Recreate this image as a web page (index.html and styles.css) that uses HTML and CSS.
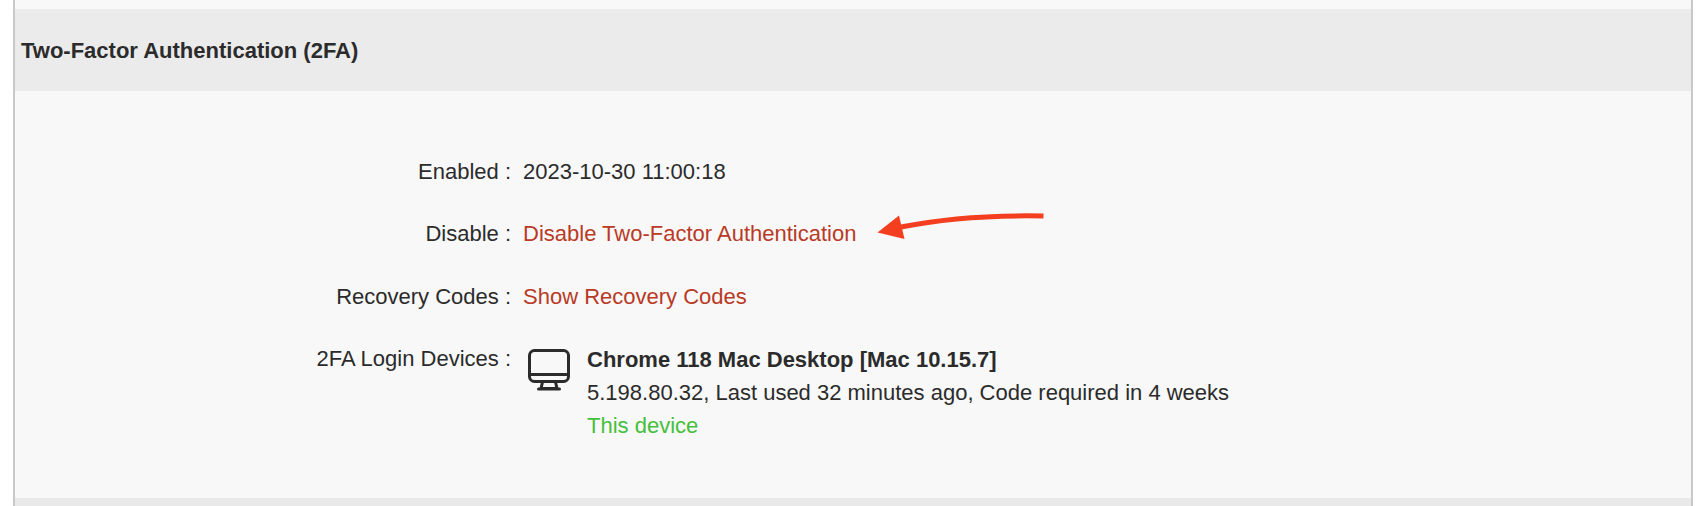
FILE: index.html
```html
<!DOCTYPE html>
<html lang="en">
<head>
    <meta charset="UTF-8">
    <title>Two-Factor Authentication</title>
    <link rel="stylesheet" href="styles.css">
</head>
<body>
    <div class="panel">
        <div class="panel-title">Two-Factor Authentication (2FA)</div>
        <div class="panel-body">
            <div class="row">
                <div class="label">Enabled :</div>
                <div class="value">2023-10-30 11:00:18</div>
            </div>
            <div class="row">
                <div class="label">Disable :</div>
                <div class="value"><a class="link" href="#">Disable Two-Factor Authentication</a></div>
            </div>
            <div class="row">
                <div class="label">Recovery Codes :</div>
                <div class="value"><a class="link" href="#">Show Recovery Codes</a></div>
            </div>
            <div class="row">
                <div class="label">2FA Login Devices :</div>
                <div class="value device">
                    <svg class="device-icon" viewBox="0 0 42 42" fill="none" stroke="#2b2b2b" stroke-width="3">
                        <rect x="1.5" y="1.5" width="39" height="31" rx="5"/>
                        <path d="M2 25.5h38"/>
                        <path d="M14.5 33l-1.5 6.5h16l-1.5-6.5"/>
                        <path d="M10.5 40h21" stroke-linecap="round"/>
                    </svg>
                    <div class="device-info">
                        <div class="device-name">Chrome 118 Mac Desktop [Mac 10.15.7]</div>
                        <div>5.198.80.32, Last used 32 minutes ago, Code required in 4 weeks</div>
                        <div class="device-current">This device</div>
                    </div>
                </div>
            </div>
        </div>
        <div class="panel-next"></div>
    </div>
    <!-- arrow drawn over the screenshot -->
    <svg class="arrow" viewBox="0 0 180 40" fill="none">
        <path d="M25 22C70 13 115 10 167.5 11" stroke="#f33f1f" stroke-width="5"/>
        <path d="M1.5 27.5L23 10.5L28.5 34Z" fill="#f33f1f"/>
    </svg>
</body>
</html>
```

FILE: styles.css
```css
* {
    margin: 0;
    padding: 0;
    box-sizing: border-box;
}
body {
    background: #fff;
    height: 506px;
    overflow: hidden;
    padding: 0 3px 0 13px;
    font-family: "Liberation Sans", Arial, sans-serif;
    font-size: 22px;
    color: #2b2b2b;
}
.panel {
    height: 506px;
    background: #f8f8f8;
    border-left: 2px solid #c8c8c8;
    border-right: 2px solid #c8c8c8;
    padding-top: 9px;
    display: flex;
    flex-direction: column;
}
.panel-title {
    height: 82px;
    background: #ebebeb;
    padding: 2px 0 0 6px;
    display: flex;
    align-items: center;
    font-weight: bold;
}
.panel-body {
    flex: 1;
    padding-top: 69px;
    display: flex;
    flex-direction: column;
    gap: 38.4px;
}
.row {
    display: flex;
    line-height: 24px;
}
.label {
    width: 496px;
    text-align: right;
    flex-shrink: 0;
}
.value {
    margin-left: 12px;
}
.link {
    color: #b93a26;
    text-decoration: none;
}
.device {
    display: flex;
    gap: 17px;
}
.device-icon {
    width: 42px;
    height: 42px;
    margin: 2px 0 0 5px;
}
.device-info {
    line-height: 33px;
    margin-top: -4px;
}
.device-name {
    font-weight: bold;
}
.device-current {
    color: #45bf3c;
}
.panel-next {
    height: 8px;
    background: #e9e9e9;
}
.arrow {
    position: absolute;
    left: 876px;
    top: 205px;
    width: 180px;
    height: 40px;
}
```
